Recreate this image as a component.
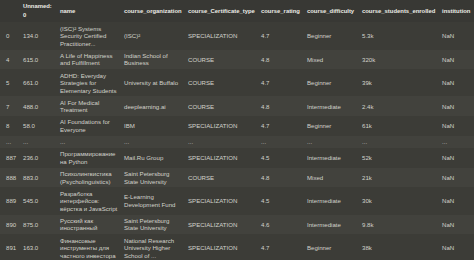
type Row = {
  idx: string;
  unnamed: string;
  name: string[];
  org: string[];
  type: string;
  rating: string;
  difficulty: string;
  students: string;
  institution: string;
};

const rows: Row[] = [
  { idx: "0", unnamed: "134.0", name: ["(ISC)² Systems", "Security Certified", "Practitioner..."], org: ["(ISC)²"], type: "SPECIALIZATION", rating: "4.7", difficulty: "Beginner", students: "5.3k", institution: "NaN" },
  { idx: "4", unnamed: "615.0", name: ["A Life of Happiness", "and Fulfillment"], org: ["Indian School of", "Business"], type: "COURSE", rating: "4.8", difficulty: "Mixed", students: "320k", institution: "NaN" },
  { idx: "5", unnamed: "661.0", name: ["ADHD: Everyday", "Strategies for", "Elementary Students"], org: ["University at Buffalo"], type: "COURSE", rating: "4.7", difficulty: "Beginner", students: "39k", institution: "NaN" },
  { idx: "7", unnamed: "488.0", name: ["AI For Medical", "Treatment"], org: ["deeplearning.ai"], type: "COURSE", rating: "4.8", difficulty: "Intermediate", students: "2.4k", institution: "NaN" },
  { idx: "8", unnamed: "58.0", name: ["AI Foundations for", "Everyone"], org: ["IBM"], type: "SPECIALIZATION", rating: "4.7", difficulty: "Beginner", students: "61k", institution: "NaN" },
  { idx: "...", unnamed: "...", name: ["..."], org: ["..."], type: "...", rating: "...", difficulty: "...", students: "...", institution: "..." },
  { idx: "887", unnamed: "236.0", name: ["Программирование", "на Python"], org: ["Mail.Ru Group"], type: "SPECIALIZATION", rating: "4.5", difficulty: "Intermediate", students: "52k", institution: "NaN" },
  { idx: "888", unnamed: "883.0", name: ["Психолингвистика", "(Psycholinguistics)"], org: ["Saint Petersburg", "State University"], type: "COURSE", rating: "4.8", difficulty: "Mixed", students: "21k", institution: "NaN" },
  { idx: "889", unnamed: "545.0", name: ["Разработка", "интерфейсов:", "вёрстка и JavaScript"], org: ["E-Learning", "Development Fund"], type: "SPECIALIZATION", rating: "4.5", difficulty: "Intermediate", students: "30k", institution: "NaN" },
  { idx: "890", unnamed: "875.0", name: ["Русский как", "иностранный"], org: ["Saint Petersburg", "State University"], type: "SPECIALIZATION", rating: "4.6", difficulty: "Intermediate", students: "9.8k", institution: "NaN" },
  { idx: "891", unnamed: "163.0", name: ["Финансовые", "инструменты для", "частного инвестора"], org: ["National Research", "University Higher", "School of ..."], type: "SPECIALIZATION", rating: "4.7", difficulty: "Beginner", students: "38k", institution: "NaN" },
];

const headers = ["name", "course_organization", "course_Certificate_type", "course_rating", "course_difficulty", "course_students_enrolled", "institution"];

function Lines({ lines }: { lines: string[] }) {
  return (
    <>
      {lines.map((l, i) => (
        <div key={i}>{l}</div>
      ))}
    </>
  );
}

export default function App() {
  return (
    <div className="w-[474px] h-[260px] overflow-hidden bg-[#3c3c37] text-[#d2d2cb] font-['Liberation_Sans',Arial,sans-serif] text-[6.1px] leading-[7.5px]">
      <table className="table-fixed w-[520px] text-left">
        <colgroup>
          <col className="w-[23px]" />
          <col className="w-[37px]" />
          <col className="w-[64px]" />
          <col className="w-[64px]" />
          <col className="w-[73px]" />
          <col className="w-[46px]" />
          <col className="w-[55px]" />
          <col className="w-[80px]" />
          <col className="w-[78px]" />
        </colgroup>
        <thead className="bg-[#383834] text-[#ecece6] font-bold text-[5.9px] leading-[9px]">
          <tr className="h-[22.4px]">
            <th className="pl-[6px]"></th>
            <th className="align-middle whitespace-nowrap">
              <div>Unnamed:</div>
              <div>0</div>
            </th>
            {headers.map((h) => (
              <th key={h} className="align-middle whitespace-nowrap">
                {h}
              </th>
            ))}
          </tr>
        </thead>
        <tbody>
          {rows.map((r, i) => (
            <tr key={r.idx + i} className={i % 2 === 1 ? "bg-[#42423d]" : "bg-[#3c3c37]"}>
              <td className="pl-[6px] py-[2.35px] align-middle whitespace-nowrap">{r.idx}</td>
              <td className="align-middle whitespace-nowrap">{r.unnamed}</td>
              <td className="py-[2.35px] align-middle whitespace-nowrap">
                <Lines lines={r.name} />
              </td>
              <td className="align-middle whitespace-nowrap">
                <Lines lines={r.org} />
              </td>
              <td className="align-middle whitespace-nowrap">{r.type}</td>
              <td className="align-middle whitespace-nowrap">{r.rating}</td>
              <td className="align-middle whitespace-nowrap">{r.difficulty}</td>
              <td className="align-middle whitespace-nowrap">{r.students}</td>
              <td className="align-middle whitespace-nowrap">{r.institution}</td>
            </tr>
          ))}
        </tbody>
      </table>
    </div>
  );
}
